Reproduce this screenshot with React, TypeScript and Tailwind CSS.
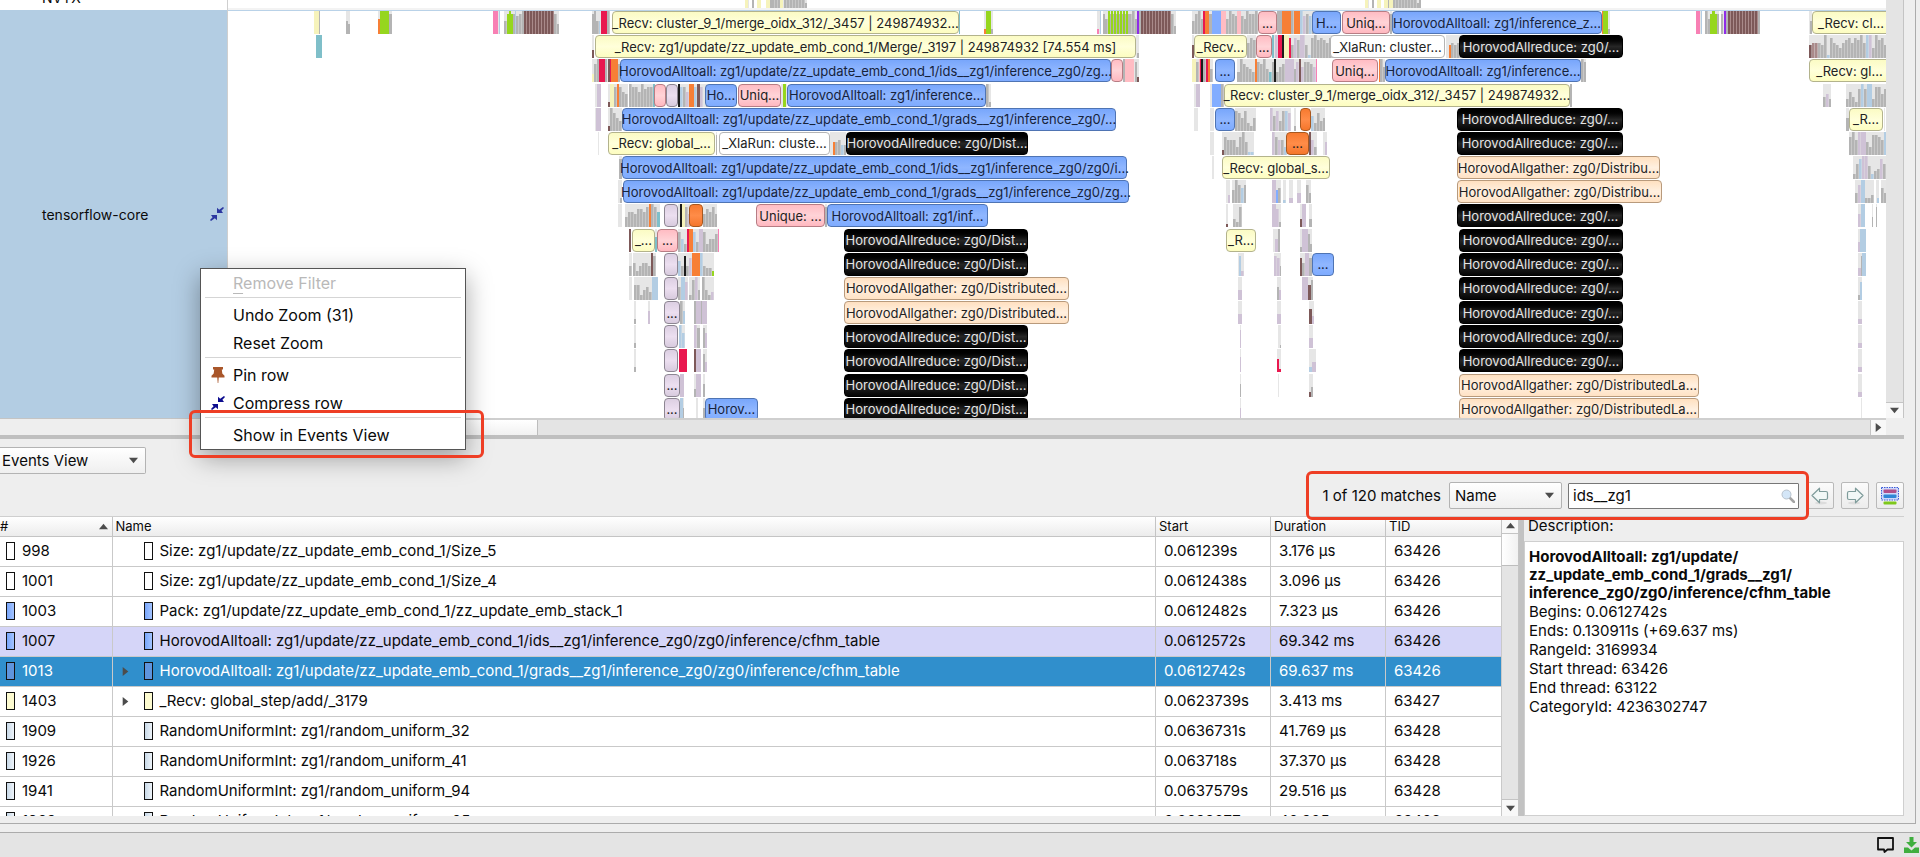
import { useState } from 'react';
import type { ReactNode } from 'react';
import { clsx } from 'clsx';

// x position where the lanes begin on the time axis
const ORIGIN = 228;

type Tone = 'yellow' | 'blue' | 'pink' | 'black' | 'peach' | 'lavender' | 'orange' | 'white';

interface LaneEvent {
  from: number;
  to: number;
  tone: Tone;
  text?: string;
}

interface Lane {
  events: LaneEvent[];
  // start position + packed bars: <colour><height 1-9>[:width], "_" is an empty slot, "." a gap
  bars: [number, string][];
}

const toneClass: Record<Tone, string> = {
  yellow: 'border-[#b3b38c] bg-linear-to-b from-[#fbfbc4] via-[#ffffda] to-[#fdfdc0] text-[#222]',
  blue: 'border-[#4f74b3] bg-linear-to-b from-[#78a6fb] via-[#8fb6ff] to-[#7eabff] text-[#16233c]',
  pink: 'border-[#b77d84] bg-linear-to-b from-[#ffbcc3] via-[#ffd3d7] to-[#ffb8c0] text-[#222]',
  black: 'border-black bg-linear-to-b from-black via-[#262626] to-[#050505] text-[#e4e4e4]',
  peach: 'border-[#b89a7c] bg-linear-to-b from-[#ffe0c0] via-[#fff0e0] to-[#ffe2c4] text-[#222]',
  lavender: 'border-[#8d8692] bg-linear-to-b from-[#dccfe2] via-[#ecdff0] to-[#d8cbde] text-[#222]',
  orange: 'border-[#a8581f] bg-linear-to-b from-[#f77a2f] via-[#ff8c48] to-[#f5762a] text-[#222]',
  white: 'border-[#b4b4b4] bg-white text-[#222]',
};

const barColor: Record<string, string> = {
  g: '#b4b4b4',
  b: '#b3cde3',
  B: '#82adff',
  p: '#ffbcc3',
  P: '#f880b4',
  r: '#e9184f',
  o: '#f77f36',
  l: '#cfc2d6',
  k: '#1c1c1c',
  n: '#7d5959',
  m: '#a98a8a',
  G: '#96d61e',
  t: '#7fbfc9',
  v: '#8f2be8',
  y: '#f6f3bb',
};

const ev = (from: number, to: number, tone: Tone, text?: string): LaneEvent => ({ from, to, tone, text });
const reduceA = ev(844, 1028, 'black', 'HorovodAllreduce: zg0/Dist...');
const reduceB = ev(1459, 1623, 'black', 'HorovodAllreduce: zg0/...');
const gatherA = ev(844, 1069, 'peach', 'HorovodAllgather: zg0/Distributed...');
const gatherB = ev(1459, 1699, 'peach', 'HorovodAllgather: zg0/DistributedLa...');
const stripes = (n: number) => 'n9:2 m9:1 '.repeat(n);
const greens = (n: number) => 'G9:2 g8:1 '.repeat(n);

const lanes: Lane[] = [
  {
    events: [
      ev(612, 959, 'yellow', '_Recv: cluster_9_1/merge_oidx_312/_3457 | 249874932...'),
      ev(1258, 1277, 'pink', '...'),
      ev(1312, 1341, 'blue', 'H...'),
      ev(1342, 1390, 'pink', 'Uniq...'),
      ev(1392, 1602, 'blue', 'HorovodAlltoall: zg1/inference_z...'),
      ev(1812, 1890, 'yellow', '_Recv: cl...'),
    ],
    bars: [
      [314, 'y9:5 g9:1'],
      [346, 'g5:2 g4:2'],
      [378, 'o6:2 G9:9 g8:3'],
      [493, 'P9:5 _:1 b9:1'],
      [504, `g5 G8:2 G9:2 G8:2 g8:2 b9:1 g7 g8 g9:2 ${stripes(10)}g8 g4:2`],
      [592, 'g8:2 g9:2 g5 b5:1 _:1 r9:6 g9'],
      [959, 't9:1'],
      [984, 'o2:2 G9:5 g2:2'],
      [1097, 'P2:2 _:1 b9:1'],
      [1103, `g8:2 g6 ${greens(7)}g8 g9 g6:2 v9:2 g9:2 ${stripes(10)}g8 g3:2`],
      [1192, 'g5 g8 g9 g6:2 r9:2 o9:4 g8:3 B9:9 p9:5 g6 g9 g8 g7:2 p9:4 g7 g6:2 g9 g8 g8 g9'],
      [1277, 'g9:3 g9:2 o9:9 g9 o9:6 b9 l7 g8 b7 g6 b5'],
      [1390, 'g8:2'],
      [1602, 'o9:1 G9:5 g2:2'],
      [1696, 'P9:4 _:1 b9:1'],
      [1705, 'g9 g6:2 G8:2 G9:3 G8:2 g8:2'],
      [1721, `g8:2 _:1 v9:2 g9:2 ${stripes(10)}g9:2`],
      [1809, '_:1 g5:2'],
    ],
  },
  {
    events: [
      ev(595, 1136, 'yellow', '_Recv: zg1/update/zz_update_emb_cond_1/Merge/_3197 | 249874932 [74.554 ms]'),
      ev(1194, 1247, 'yellow', '_Recv...'),
      ev(1256, 1272, 'pink', '...'),
      ev(1330, 1445, 'white', '_XlaRun: cluster...'),
      reduceB,
    ],
    bars: [
      [316, 't9:6'],
      [592, 'n3:2'],
      [1136, '_:1 g2:2'],
      [1192, 'n5:2'],
      [1247, 'g6 g8 g7'],
      [1272, 't9:2 _:1 l9 r9:4 k9:2 y9:5 r8:2 g5 l8 g7 l9:2 l9 g5 b1 g8 g9 g7 g8 g7 g6 g8 g8'],
      [1446, '_ o5:2 g6 g5 g6 g5'],
      [1809, 'n5 m6 m6 g6 g5 g9 b1 g8 g6 g5 g4 g6 g7 g8 g6 g8 g7 g9 g6 b9 l9 g4 g9 g7 g8 g5 g8 r9:1'],
    ],
  },
  {
    events: [
      ev(620, 1111, 'blue', 'HorovodAlltoall: zg1/update/zz_update_emb_cond_1/ids__zg1/inference_zg0/zg...'),
      ev(1111, 1123, 'pink'),
      ev(1215, 1235, 'blue', '...'),
      ev(1332, 1378, 'pink', 'Uniq...'),
      ev(1385, 1581, 'blue', 'HorovodAlltoall: zg1/inference...'),
      ev(1809, 1890, 'yellow', '_Recv: gl...'),
    ],
    bars: [
      [592, 'y3:2 g7 g9:2 r9:6 g9:2 _:1 n9:2 r9:1 o9:7 g7:2'],
      [1123, 'g9:2 p9:9 _:1 g8:2 n2:2'],
      [1192, 'y9:4 g8 p9:1 r9:1 k9:2 g9 r9:2 o9:2 g5'],
      [1237, 'g4:3 g9 g7 g6 g5 g4 o9:2 g8 g7 g9 g5 t4 g8:2 k9:2 g4 g6 g7 l9:9 g5:2 l8 n9:2 l6 g8 g8 g7 l6 P9:1'],
      [1379, 'o9:1 g9 g6:2'],
      [1581, 'g9 g8:2'],
    ],
  },
  {
    events: [
      ev(654, 666, 'pink'),
      ev(666, 678, 'lavender'),
      ev(705, 737, 'blue', 'Ho...'),
      ev(738, 781, 'pink', 'Uniq...'),
      ev(787, 986, 'blue', 'HorovodAlltoall: zg1/inference...'),
      ev(1224, 1570, 'yellow', '_Recv: cluster_9_1/merge_oidx_312/_3457 | 249874932...'),
    ],
    bars: [
      [595, '_:2 l9:4'],
      [608, 'n2:2 y9:4 g8 o9:2 g8 g6 g5 .:1 g9 g8 g8 g6 g9 g7 g8 g8 t9:2'],
      [678, 'k9:2 b8 g8 l6 o9:5 b8 n9:3 l8 _ g5'],
      [781, '_:2 G9:3 _:1'],
      [986, 'g9 g2:2'],
      [1194, '_:2 l9:4'],
      [1210, '_:2 B9:9 g9 '],
      [1570, 'g9:2'],
      [1823, 'g4 l5 g3:2'],
      [1846, 'g3 g6 g4 g2 g7 b9 g7 b9:5 g3 g8 g8 g5 g7 l5 g8 g8:2'],
    ],
  },
  {
    events: [
      ev(622, 1116, 'blue', 'HorovodAlltoall: zg1/update/zz_update_emb_cond_1/grads__zg1/inference_zg0/...'),
      ev(1215, 1235, 'blue', '...'),
      ev(1300, 1311, 'orange'),
      ev(1457, 1623, 'black', 'HorovodAllreduce: zg0/...'),
      ev(1849, 1883, 'yellow', '_R...'),
    ],
    bars: [
      [595, '_:1 l9:5'],
      [608, 'n2:2 g9 g7 g5 g4'],
      [1194, '_:4'],
      [1210, '_:4'],
      [1235, 'g8 g7 g5 g8 g3 g2 g5'],
      [1270, 'l9 g6 l8 g4 g8 b8 l7 .:3 g2:2'],
      [1311, 'b6 g3 g7 g4 g5:2'],
      [1846, 'g5:3'],
      [1884, '_:1'],
    ],
  },
  {
    events: [
      ev(608, 715, 'yellow', '_Recv: global_...'),
      ev(719, 830, 'white', '_XlaRun: cluste...'),
      ev(846, 1028, 'black', 'HorovodAllreduce: zg0/Dist...'),
      ev(1286, 1309, 'orange', '...'),
      ev(1457, 1623, 'black', 'HorovodAllreduce: zg0/...'),
    ],
    bars: [
      [598, '_:1'],
      [716, 'g8:1'],
      [830, '_ o5:2 g5 g6 b4 g4:2'],
      [1210, '_:4'],
      [1222, 'n2:2 g7 g6 g6 g6 g3 g7 g9 g5 b1 b1'],
      [1272, 'l9 g7 l6 g6 b3 '],
      [1309, 'n9:2 l6 g3'],
      [1323, '_:2 l5:2'],
      [1849, 'g7 g9 g6 l9 l9:5 g5 g3 g8 g8 g7 g6 b9:2'],
    ],
  },
  {
    events: [
      ev(622, 1127, 'blue', 'HorovodAlltoall: zg1/update/zz_update_emb_cond_1/ids__zg1/inference_zg0/zg0/i...'),
      ev(1222, 1330, 'yellow', '_Recv: global_s...'),
      ev(1457, 1660, 'peach', 'HorovodAllgather: zg0/Distribu...'),
    ],
    bars: [
      [619, 'g8:3'],
      [1212, '_:2'],
      [1853, 'g2 g6 b8 l9 l9 g5 b2 g3 g4 l8 g6 g4:2'],
    ],
  },
  {
    events: [
      ev(623, 1129, 'blue', 'HorovodAlltoall: zg1/update/zz_update_emb_cond_1/grads__zg1/inference_zg0/zg...'),
      ev(1457, 1662, 'peach', 'HorovodAllgather: zg0/Distribu...'),
    ],
    bars: [
      [618, '_:2 g2:2'],
      [1226, '_:2 l3:2 .:2 g5 g9 g7 b6 g7:2'],
      [1272, 'l9:4 B5:2 g6 .:2 b1 .:3 l2:4 .:4 l4:4 .:5 g7 g4:2'],
      [1855, 'g4 l7 b9:4 g2 g2 g3'],
      [1876, '_:1 b2:2 .:2 g6 g4'],
    ],
  },
  {
    events: [
      ev(664, 678, 'lavender'),
      ev(689, 703, 'orange'),
      ev(756, 825, 'pink', 'Unique: ...'),
      ev(827, 988, 'blue', 'HorovodAlltoall: zg1/inf...'),
      ev(1457, 1623, 'black', 'HorovodAllreduce: zg0/...'),
    ],
    bars: [
      [618, '_:4 .:3 g4 g6 g6 g5 g7 g7 g6 g8 o9:2 g9 g8 t6:3'],
      [678, '_:2 k9:2 y9:3 g8 l5:2'],
      [703, 'g5 g7 g6 g8 g5:2'],
      [825, 'g8:2'],
      [1226, 'n1:2 .:5 g3 g2 g8'],
      [1272, 'l9:4 l7 g2:2'],
      [1300, 'n3:2 l9:4 .:3 g3:3'],
      [1858, 'l5 b9:4 .:7 g4:1 .:3 g8:1'],
    ],
  },
  {
    events: [
      ev(632, 655, 'yellow', '_...'),
      ev(657, 678, 'pink', '...'),
      reduceA,
      ev(1226, 1256, 'yellow', '_R...'),
      reduceB,
    ],
    bars: [
      [629, 'n9:2'],
      [655, 't6:2'],
      [678, 'g8 b5 g3 r9:2 o9:4 b8 g4 l9:4 g8 g3 g5 g5 g7 P9:1'],
      [1273, '_:2 l5:3 g9:2'],
      [1300, 'g2:2 l9:6 g7:2 g3:2'],
      [1858, 'l4:2 b9:6'],
    ],
  },
  {
    events: [ev(664, 678, 'lavender'), reduceA, ev(1312, 1334, 'blue', '...'), reduceB],
    bars: [
      [629, 'g4 .:1 g5 g2 g4 g5 g5 g4 n9:2 g8'],
      [678, 'b6 g4 k8:2 g4 l7 o9:8 b9 g4 g3 g3 G2:2'],
      [1238, '_:1 b8:2 l2'],
      [1274, 'l8 l7 g4:1'],
      [1300, 'n7:2 g5 l9:4 g7:3'],
      [1858, 'l3:3 g8:1 b9:4'],
    ],
  },
  {
    events: [ev(664, 678, 'lavender'), gatherA, reduceB],
    bars: [
      [629, '_:3 .:2 g6 g6 g2 g4 g5 g3 b9:6'],
      [678, 'g5 b9:4 l7 .:1 g2 g8 l9 g4:2 .:2 g9 g4 g2 l3'],
      [1238, 'l4:4'],
      [1277, 'g5:2 l4:2'],
      [1302, 'l9:6 n6:3 g8:2'],
      [1858, 'g2:2 b7:2'],
    ],
  },
  {
    events: [ev(664, 680, 'lavender', '...'), gatherA, reduceB],
    bars: [
      [634, 'g2:2'],
      [648, 'l5:2'],
      [680, 'g9 b5:2'],
      [694, 'g9:2 l9:5 g9:1 l9:5'],
      [1238, 'l4:4'],
      [1277, 'l4:4'],
      [1309, 'n6:3 l3:2'],
      [1858, 'l2:4'],
    ],
  },
  {
    events: [ev(664, 678, 'lavender'), reduceA, reduceB],
    bars: [
      [634, 'g2:2'],
      [679, 'b9 b6 '],
      [694, 'l9 g8:3 .:3 g8:2 l6:2'],
      [1240, 'l7:1'],
      [1278, '_:2 g1:1'],
      [1309, 'l4:4'],
      [1858, 'l2:4'],
    ],
  },
  {
    events: [ev(664, 678, 'lavender'), reduceA, reduceB],
    bars: [
      [634, 'g2:2'],
      [679, 'r9:8'],
      [694, 'n9:2 l9:5 .:2 g7:2 l4:2'],
      [1240, 'l6:1'],
      [1277, 'r5:2 r1:2'],
      [1309, 'b2:3 l4:4'],
      [1858, 'l2:4'],
    ],
  },
  {
    events: [ev(664, 680, 'lavender', '...'), reduceA, gatherB],
    bars: [
      [680, 'l9:4 '],
      [694, 'g3:2 l9:5 .:2 g5:2'],
      [1240, 'g5:1'],
      [1278, '_:1 '],
      [1309, 'n2:2 g4:2'],
      [1858, 'l2:4'],
    ],
  },
  {
    events: [ev(664, 680, 'lavender', '...'), ev(705, 758, 'blue', 'Horov...'), reduceA, gatherB],
    bars: [
      [680, 'b9:3 g5:1'],
      [696, '_:2 .:5 g5:2'],
      [1240, 'l5:1'],
      [1861, '_:1'],
    ],
  },
];

function Bars({ start, spec }: { start: number; spec: string }) {
  const rects: ReactNode[] = [];
  let x = start - ORIGIN;
  spec.trim().split(/\s+/).forEach((token, i) => {
    const [head, size] = token.split(':');
    const w = size ? Number(size) : 3;
    if (head[0] !== '.') {
      rects.push(<rect key={`bg${i}`} x={x} y={0} width={w} height={23} fill="#e6e6e6" />);
    }
    const color = barColor[head[0]];
    if (color) {
      const h = Math.round((Number(head[1]) / 9) * 23);
      rects.push(<rect key={`a${i}`} x={x} y={23 - h} width={w} height={h} fill={color} opacity={0.6} />);
      rects.push(<rect key={`b${i}`} x={x} y={23 - h} width={size ? w : 2} height={h} fill={color} />);
    }
    x += w;
  });
  return <g>{rects}</g>;
}

function LaneRow({ lane }: { lane: Lane }) {
  return (
    <div className="relative">
      <svg className="absolute inset-0 h-[23px] w-full" shapeRendering="crispEdges">
        {lane.bars.map(([start, spec]) => (
          <Bars key={start} start={start} spec={spec} />
        ))}
      </svg>
      {lane.events.map((e) => (
        <div
          key={e.from}
          className={clsx(
            'absolute top-0 flex h-[23px] items-center justify-center rounded-[4px] border text-[13px] leading-4 whitespace-nowrap',
            toneClass[e.tone],
          )}
          style={{ left: e.from - ORIGIN, width: e.to - e.from }}
        >
          {e.text}
        </div>
      ))}
    </div>
  );
}

function CompressIcon({ color }: { color: string }) {
  return (
    <svg viewBox="0 0 14 14" className="size-[14px]" fill={color} aria-hidden="true">
      <path d="M13 0l1 1-2.600 2.700L13 6H7V.8l2.200 2z" />
      <path d="M1 14l-1-1 2.600-2.700L1 8h6v5.200l-2.200-2z" />
    </svg>
  );
}

function PinIcon() {
  return (
    <svg viewBox="0 0 14 16" className="h-4 w-[14px]" fill="#a9562a" aria-hidden="true">
      <path d="M2 0h10v2.4h-1.2l.5 4 2.2 2.4v1.6H.5V8.8l2.2-2.4.5-4H2z" />
      <path d="M6.2 10h1.6L7.3 16h-.6z" />
    </svg>
  );
}

function Triangle({ dir }: { dir: 'up' | 'down' | 'right' }) {
  const d = { up: 'M0 6l4-5 4 5z', down: 'M0 1h8L4 6z', right: 'M1 0l5 4-5 4z' }[dir];
  return (
    <svg viewBox={dir === 'right' ? '0 0 7 8' : '0 0 8 7'} className="size-[9px]" fill="#4c4c4c" aria-hidden="true">
      <path d={d} />
    </svg>
  );
}

function MenuItem({ icon, disabled, children }: { icon?: ReactNode; disabled?: boolean; children: ReactNode }) {
  return (
    <button
      type="button"
      role="menuitem"
      disabled={disabled}
      className="flex h-7 w-full items-center text-left text-[16px] leading-5 disabled:text-[#b9b9b9]"
    >
      <span className="flex w-8 justify-center pl-px">{icon}</span>
      {children}
    </button>
  );
}

function MenuLine() {
  return <div role="separator" className="mx-1 mb-[3px] h-px bg-[#d5d5d5]" />;
}

function ContextMenu() {
  return (
    <div
      role="menu"
      className="absolute top-[268px] left-[200px] w-[266px] border border-[#555] bg-white shadow-[0_8px_24px_rgba(0,0,0,0.35)]"
    >
      <MenuItem disabled>
        <span>
          <span className="underline underline-offset-4">R</span>emove Filter
        </span>
      </MenuItem>
      <MenuLine />
      <MenuItem>Undo Zoom (31)</MenuItem>
      <MenuItem>Reset Zoom</MenuItem>
      <MenuLine />
      <MenuItem icon={<PinIcon />}>Pin row</MenuItem>
      <MenuItem icon={<CompressIcon color="#0d0d8f" />}>Compress row</MenuItem>
      <MenuLine />
      <MenuItem>Show in Events View</MenuItem>
    </div>
  );
}

function Timeline() {
  return (
    <section className="shrink-0">
      <div className="flex h-[418px] overflow-hidden">
        <div className="flex w-57 shrink-0 flex-col border-r border-[#cfcfcf] bg-white">
          <div className="flex h-[10px] shrink-0 items-end pl-[42px] text-[14px] leading-4">
            <span className="mb-1">NVTX</span>
          </div>
          <div className="flex flex-1 items-center justify-between bg-[#b3cde3] pr-[3px] pl-[42px] text-[14px]">
            tensorflow-core
            <button type="button" aria-label="Compress row">
              <CompressIcon color="#2b36a0" />
            </button>
          </div>
        </div>
        <div className="min-w-0 flex-1 overflow-hidden bg-white">
          <svg className="block h-2 w-full" shapeRendering="crispEdges">
            <g transform="translate(0 -15)">
              <Bars start={745} spec="y9:3 _:1 .:3 g4:2 .:3 y9:4 .:5 y9:4 g9:2 g9 g9 g8:2 y9:3 _:1 g9 g9 g8 g9 g9 g9 g9 g2:2" />
              <Bars start={1365} spec="y9:3 _:1 .:3 g4:2 .:3 y9:4 .:3 y9:4 g9:1 y9:4 g9 g9 g8 g9 g9 g9 g9 g9 g2:2 g9:2" />
            </g>
          </svg>
          <div className="h-[3px] border-b border-[#b9d2e8] bg-[#f3f3f3]" />
          <div className="grid h-[411px] grid-rows-[repeat(17,1fr)]">
            {lanes.map((lane, i) => (
              <LaneRow key={i} lane={lane} />
            ))}
          </div>
        </div>
        <div className="relative flex w-[18px] shrink-0 flex-col border-r border-[#c4c4c4] bg-[#e4e4e4]">
          <button
            type="button"
            aria-label="Scroll down"
            className="mt-auto flex h-4 items-center justify-center border-t border-[#c4c4c4] bg-[#f8f8f8]"
          >
            <Triangle dir="down" />
          </button>
        </div>
        <div className="w-3 shrink-0 border-r border-[#ababab] bg-[#eee]" />
        <div className="w-1 shrink-0 bg-[#eee]" />
      </div>
      <div className="mr-1 flex h-[17px] border-r border-[#ababab] bg-[#eee]">
        <div className="w-57 shrink-0 border-t border-[#c4c4c4]" />
        <div className="flex min-w-0 flex-1 border-t-2 border-[#cfcfcf] bg-[#e4e4e4]">
          <div className="w-[310px] border-r border-[#bdbdbd] bg-linear-to-b from-white to-[#f1f1f1]" />
          <button
            type="button"
            aria-label="Scroll right"
            className="ml-auto flex w-4 items-center justify-center border-l border-[#c4c4c4] bg-[#f8f8f8]"
          >
            <Triangle dir="right" />
          </button>
        </div>
        <div className="w-[29px] shrink-0" />
      </div>
      <div className="mr-1 border-r border-[#ababab] pr-[11px]">
        <div className="h-1 bg-[#bfbfbf]" />
      </div>
    </section>
  );
}

interface EventRow {
  id: string;
  name: string;
  start: string;
  duration: string;
  tid: string;
  swatch: string;
  children?: boolean;
}

const WHITE = 'bg-white';
const BLUE = 'bg-linear-to-r from-[#78a6fb] to-[#a4c4ff]';
const PALE = 'bg-linear-to-r from-[#c8d9e8] to-[#eef4fa]';

const rows: EventRow[] = [
  { id: '998', name: 'Size: zg1/update/zz_update_emb_cond_1/Size_5', start: '0.061239s', duration: '3.176 µs', tid: '63426', swatch: WHITE },
  { id: '1001', name: 'Size: zg1/update/zz_update_emb_cond_1/Size_4', start: '0.0612438s', duration: '3.096 µs', tid: '63426', swatch: WHITE },
  { id: '1003', name: 'Pack: zg1/update/zz_update_emb_cond_1/zz_update_emb_stack_1', start: '0.0612482s', duration: '7.323 µs', tid: '63426', swatch: BLUE },
  { id: '1007', name: 'HorovodAlltoall: zg1/update/zz_update_emb_cond_1/ids__zg1/inference_zg0/zg0/inference/cfhm_table', start: '0.0612572s', duration: '69.342 ms', tid: '63426', swatch: BLUE },
  { id: '1013', name: 'HorovodAlltoall: zg1/update/zz_update_emb_cond_1/grads__zg1/inference_zg0/zg0/inference/cfhm_table', start: '0.0612742s', duration: '69.637 ms', tid: '63426', swatch: 'bg-[#5f95dd]', children: true },
  { id: '1403', name: '_Recv: global_step/add/_3179', start: '0.0623739s', duration: '3.413 ms', tid: '63427', swatch: 'bg-[#fdfbd0]', children: true },
  { id: '1909', name: 'RandomUniformInt: zg1/random_uniform_32', start: '0.0636731s', duration: '41.769 µs', tid: '63428', swatch: PALE },
  { id: '1926', name: 'RandomUniformInt: zg1/random_uniform_41', start: '0.063718s', duration: '37.370 µs', tid: '63428', swatch: PALE },
  { id: '1941', name: 'RandomUniformInt: zg1/random_uniform_94', start: '0.0637579s', duration: '29.516 µs', tid: '63428', swatch: PALE },
  { id: '1963', name: 'RandomUniformInt: zg1/random_uniform_25', start: '0.0638077s', duration: '40.305 µs', tid: '63428', swatch: PALE },
];

function Swatch({ className }: { className: string }) {
  return <span className={clsx('inline-block h-[18px] w-[9px] shrink-0 border border-[#111]', className)} />;
}

function EventsTable() {
  const [selected, setSelected] = useState('1013');
  const matched = '1007';

  return (
    <div className="flex min-w-0 flex-1 overflow-hidden">
      <div className="min-w-0 flex-1 overflow-hidden bg-white">
        <table className="w-full table-fixed border-collapse text-[15px] leading-5">
          <colgroup>
            <col className="w-28" />
            <col />
            <col className="w-[115px]" />
            <col className="w-[115px]" />
            <col className="w-[116px]" />
          </colgroup>
          <thead>
            <tr className="h-[19px] bg-linear-to-b from-white to-[#ececec] text-left text-[13px] leading-4">
              <th className="border-r border-b border-[#c4c4c4] p-0 font-normal">
                <span className="flex items-center justify-between pr-1">
                  #
                  <Triangle dir="up" />
                </span>
              </th>
              <th className="border-r border-b border-[#c4c4c4] py-0 pl-[3px] font-normal">Name</th>
              <th className="border-r border-b border-[#c4c4c4] py-0 pl-[3px] font-normal">Start</th>
              <th className="border-r border-b border-[#c4c4c4] py-0 pl-[3px] font-normal">Duration</th>
              <th className="border-r border-b border-[#c4c4c4] py-0 pl-[3px] font-normal">TID</th>
            </tr>
          </thead>
          <tbody>
            {rows.map((row) => (
              <tr
                key={row.id}
                onClick={() => setSelected(row.id)}
                className={clsx(
                  'h-[30px]',
                  row.id === selected ? 'bg-[#308fcc] text-white' : row.id === matched && 'bg-[#d5d5f8]',
                )}
              >
                <td className="border-r border-b border-[#c9c9c9] p-0">
                  <span className="flex items-center gap-[7px] pl-[6px]">
                    <Swatch className={row.swatch} />
                    {row.id}
                  </span>
                </td>
                <td className="border-r border-b border-[#c9c9c9] p-0">
                  <span className="flex items-center whitespace-nowrap">
                    <span className="flex w-[31px] pl-2">{row.children && <Triangle dir="right" />}</span>
                    <Swatch className={row.swatch} />
                    <span className="pl-[7px]">{row.name}</span>
                  </span>
                </td>
                <td className="border-r border-b border-[#c9c9c9] py-0 pl-2">{row.start}</td>
                <td className="border-r border-b border-[#c9c9c9] py-0 pl-2">{row.duration}</td>
                <td className="border-r border-b border-[#c9c9c9] py-0 pl-2">{row.tid}</td>
              </tr>
            ))}
          </tbody>
        </table>
      </div>
      <div className="flex w-[17px] shrink-0 flex-col border-r border-[#c4c4c4] bg-[#e4e4e4]">
        <button type="button" aria-label="Scroll up" className="flex h-[17px] items-center justify-center border-b border-[#c4c4c4] bg-[#f8f8f8]">
          <Triangle dir="up" />
        </button>
        <div className="h-8 border-b border-[#bdbdbd] bg-linear-to-r from-white to-[#f1f1f1]" />
        <button type="button" aria-label="Scroll down" className="mt-auto flex h-[17px] items-center justify-center border-t border-[#c4c4c4] bg-[#f8f8f8]">
          <Triangle dir="down" />
        </button>
      </div>
    </div>
  );
}

function Dropdown({ label, options, className }: { label: string; options: string[]; className: string }) {
  return (
    <div className="relative w-fit">
      <select
        aria-label={label}
        className={clsx(
          'block h-[27px] appearance-none border border-[#b3b3b3] bg-linear-to-b from-white to-[#efefef] text-[15px] leading-5',
          className,
        )}
      >
        {options.map((o) => (
          <option key={o}>{o}</option>
        ))}
      </select>
      <span className="pointer-events-none absolute inset-y-0 right-2 flex items-center">
        <Triangle dir="down" />
      </span>
    </div>
  );
}

function ToolButton({ label, children }: { label: string; children: ReactNode }) {
  return (
    <button
      type="button"
      aria-label={label}
      className="flex h-[27px] w-7 items-center justify-center rounded-[2px] border border-[#b9b9b9] bg-linear-to-b from-[#fbfbfb] to-[#ececec]"
    >
      {children}
    </button>
  );
}

function ArrowIcon({ flip }: { flip?: boolean }) {
  return (
    <svg viewBox="0 0 18 18" className={clsx('size-[18px]', flip && '-scale-x-100')} aria-hidden="true">
      <ellipse cx="10" cy="16" rx="6" ry="1.5" fill="#dcdcdc" />
      <path
        d="M1 8.500L8.500 1.200v3.300H15q1.500 0 1.500 1.500v5q0 1.500-1.500 1.500H8.500v3.300z"
        fill="#f2f8f7"
        stroke="#7f9c9b"
        strokeWidth="1.200"
        strokeLinejoin="round"
      />
    </svg>
  );
}

function SearchBar() {
  const [query, setQuery] = useState('ids__zg1');

  return (
    <div className="flex justify-end gap-[7px]">
      <div className="relative flex items-center gap-[6px]">
        <span className="pr-[2px] text-[15px] leading-5">1 of 120 matches</span>
        <Dropdown label="Search column" options={['Name', 'Start', 'Duration', 'TID']} className="w-[113px] rounded-[2px] pl-[5px]" />
        <div className="relative">
          <input
            type="text"
            aria-label="Search"
            value={query}
            onChange={(e) => setQuery(e.target.value)}
            className="block h-[26px] w-[231px] rounded-[1px] border border-[#777] bg-white pr-6 pl-1 text-[15px] leading-5 outline-none"
          />
          <svg viewBox="0 0 14 14" className="pointer-events-none absolute top-[6px] right-1 size-[14px]" aria-hidden="true">
            <path d="M8 8l5 5" stroke="#a5a5a5" strokeWidth="2.500" strokeLinecap="round" />
            <circle cx="5.500" cy="5.500" r="4.500" fill="#d4e6f7" stroke="#b9c3cd" />
          </svg>
        </div>
        {/* highlight around the search controls */}
        <div className="pointer-events-none absolute -top-[11px] -right-[10px] -bottom-[11px] -left-[17px] z-10 rounded-[6px] border-3 border-[#ee3e25]" />
      </div>
      <ToolButton label="Previous match">
        <ArrowIcon />
      </ToolButton>
      <ToolButton label="Next match">
        <ArrowIcon flip />
      </ToolButton>
      <ToolButton label="Highlight matches">
        <svg viewBox="0 0 18 18" className="size-[18px]" aria-hidden="true">
          <rect x="0.500" y="0.500" width="17" height="12.500" fill="#cdd8fb" stroke="#3a5bd9" strokeDasharray="1.500 1" />
          <rect x="2.500" y="2.500" width="13" height="3.500" rx="1" fill="#b04f8a" />
          <rect x="2.500" y="7.500" width="13" height="3.500" rx="1" fill="#2f86d6" />
          <rect x="2.500" y="14.500" width="13" height="3" rx="1" fill="#7ec81c" />
        </svg>
      </ToolButton>
    </div>
  );
}

function Description() {
  return (
    <aside className="flex w-[385px] shrink-0 flex-col border-l-5 border-[#c2c2c2]">
      <h2 className="pb-[6px] pl-1 text-[15px] leading-[18px]">Description:</h2>
      <div className="flex-1 border border-[#cfcfcf] bg-white px-1 py-[6px] text-[15px] leading-[19px]">
        <p className="leading-[18px] font-bold">
          HorovodAlltoall: zg1/update/
          <br />
          zz_update_emb_cond_1/grads__zg1/
          <br />
          inference_zg0/zg0/inference/cfhm_table
        </p>
        <p>Begins: 0.0612742s</p>
        <p>Ends: 0.130911s (+69.637 ms)</p>
        <p>RangeId: 3169934</p>
        <p>Start thread: 63426</p>
        <p>End thread: 63122</p>
        <p>CategoryId: 4236302747</p>
      </div>
    </aside>
  );
}

function StatusBar() {
  return (
    <footer className="flex h-[25px] shrink-0 items-center justify-end gap-[9px] border-t border-[#ababab] bg-[#e4e4e4]">
      <button type="button" aria-label="Messages">
        <svg viewBox="0 0 17 16" className="h-4 w-[17px]" fill="none" stroke="#111" strokeWidth="1.800" strokeLinejoin="round" aria-hidden="true">
          <path d="M1 1h15v11.500H10.500L7.500 15l-.5-2.500H1z" />
        </svg>
      </button>
      <button type="button" aria-label="Downloads">
        <svg viewBox="0 0 17 16" className="h-4 w-[17px]" fill="#3fae3f" aria-hidden="true">
          <path d="M6.500 0h4v5H14L8.500 10.500 3 5h3.500z" />
          <path d="M1 10.500h4l3.500 3 3.500-3h4v5.500H1z" />
        </svg>
      </button>
    </footer>
  );
}

export default function App() {
  return (
    <div className="relative flex h-screen flex-col overflow-hidden bg-[#eee] font-['Inter',sans-serif] text-[#0a0a0a]">
      <Timeline />
      <main className="mr-1 mb-2 flex min-h-0 flex-1 flex-col border-r border-b border-[#ababab] pr-[11px] pb-[7px]">
        <div className="pt-2">
          <Dropdown label="View" options={['Events View', 'Stats View', 'Diagnostics']} className="w-[146px] rounded-r-[2px] border-l-0 pl-[2px]" />
        </div>
        <div className="pt-2 pb-[7px]">
          <SearchBar />
        </div>
        <div className="flex min-h-0 flex-1 border-t border-[#cfcfcf]">
          <EventsTable />
          <Description />
        </div>
      </main>
      <StatusBar />
      <ContextMenu />
      {/* highlight around the last menu entry */}
      <div className="pointer-events-none absolute top-[410px] left-[189px] h-12 w-[295px] rounded-[6px] border-3 border-[#ee3e25]" />
    </div>
  );
}
